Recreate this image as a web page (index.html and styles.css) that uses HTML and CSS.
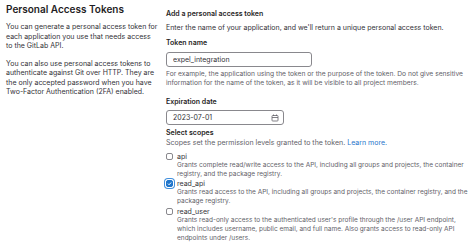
FILE: index.html
```html
<!DOCTYPE html>
<html lang="en">
<head>
    <meta charset="UTF-8">
    <meta name="viewport" content="width=device-width, initial-scale=1.0">
    <title>Personal Access Tokens</title>
    <link rel="stylesheet" href="styles.css">
</head>
<body>

    <div class="settings-row">
        <!-- Description -->
        <div class="settings-info">
            <h4>Personal Access Tokens</h4>
            <p>You can generate a personal access token for each application you use that needs access to the GitLab API.</p>
            <p>You can also use personal access tokens to authenticate against Git over HTTP. They are the only accepted password when you have Two-Factor Authentication (2FA) enabled.</p>
        </div>

        <!-- Formulaire -->
        <div class="settings-form">
            <h5>Add a personal access token</h5>
            <p class="intro">Enter the name of your application, and we'll return a unique personal access token.</p>

            <div class="form-group group-name">
                <label for="tokenName">Token name</label>
                <input type="text" id="tokenName" class="field field-wide" value="expel_integration">
                <p class="help">For example, the application using the token or the purpose of the token. Do not give sensitive information for the name of the token, as it will be visible to all project members.</p>
            </div>

            <div class="form-group group-date">
                <label for="expiresAt">Expiration date</label>
                <div class="field field-date">
                    <span>2023-07-01</span>
                    <svg width="8" height="8" viewBox="0 0 16 16" fill="none" stroke="#626168" stroke-width="1.6">
                        <rect x="2" y="3" width="12" height="11" rx="1.5"/>
                        <path d="M2 7h12M5 1v3M11 1v3"/>
                    </svg>
                </div>
            </div>

            <div class="form-group">
                <label class="label-tight">Select scopes</label>
                <p class="scopes-intro">Scopes set the permission levels granted to the token. <a href="#">Learn more.</a></p>

                <div class="scope">
                    <span class="check"></span>
                    <div>
                        <div class="scope-name">api</div>
                        <p class="help">Grants complete read/write access to the API, including all groups and projects, the container registry, and the package registry.</p>
                    </div>
                </div>

                <div class="scope">
                    <span class="check checked">
                        <svg width="5" height="5" viewBox="0 0 8 8" fill="none" stroke="#fff" stroke-width="1.6">
                            <path d="M1.5 4.2l1.8 1.8 3.3-3.6"/>
                        </svg>
                    </span>
                    <div>
                        <div class="scope-name">read_api</div>
                        <p class="help">Grants read access to the API, including all groups and projects, the container registry, and the package registry.</p>
                    </div>
                </div>

                <div class="scope">
                    <span class="check"></span>
                    <div>
                        <div class="scope-name">read_user</div>
                        <p class="help">Grants read-only access to the authenticated user's profile through the /user API endpoint, which includes username, public email, and full name. Also grants access to read-only API endpoints under /users.</p>
                    </div>
                </div>
            </div>
        </div>
    </div>

</body>
</html>
```

FILE: styles.css
```css
/* Styles généraux */
body {
    font-family: Inter, "Noto Sans", sans-serif;
    font-size: 7px;
    line-height: 9.5px;
    color: #333238;
    background: #ffffff;
    margin: 0;
    overflow: hidden;
}

p {
    margin: 0;
}

.settings-row {
    display: flex;
    gap: 8px;
    padding: 3px 0 0 6px;
}

.settings-info {
    flex: 0 0 152px;
}

h4 {
    font-size: 10px;
    line-height: 12px;
    font-weight: 600;
    color: #1f1e24;
    margin: 0 0 7px;
}

.settings-info p {
    margin-bottom: 8px;
    color: #333238;
}

.settings-form {
    flex: 1;
    min-width: 0;
    padding-top: 6px;
}

h5 {
    font-size: 7px;
    font-weight: 600;
    color: #1f1e24;
    margin: 0 0 4px;
}

.intro {
    margin-bottom: 6px;
    white-space: nowrap;
}

.group-name {
    margin-bottom: 8px;
}

.group-date {
    margin-bottom: 3px;
}

label {
    display: block;
    font-weight: 600;
    color: #1f1e24;
    margin-bottom: 4px;
}

label.label-tight {
    margin-bottom: 0;
}

.field {
    display: flex;
    align-items: center;
    box-sizing: border-box;
    height: 15px;
    padding: 0 6px;
    border: 1px solid #89888d;
    border-radius: 3px;
    font-family: inherit;
    font-size: 7px;
    color: #333238;
    background: #fff;
}

.field-wide {
    width: 146px;
}

.field-date {
    width: 118px;
    justify-content: space-between;
    padding-right: 4px;
}

.help {
    font-size: 6.7px;
    color: #626168;
    margin-top: 3px;
    width: 300px;
}

.scopes-intro {
    color: #626168;
    margin-bottom: 4.5px;
    white-space: nowrap;
}

a {
    color: #1f75cb;
    text-decoration: none;
}

.scope {
    display: flex;
    gap: 4px;
    margin-bottom: 0.5px;
    line-height: 9px;
}

.scope .help {
    font-size: 6.5px;
    margin-top: 0;
    line-height: 9px;
    width: 296px;
}

.check {
    flex: 0 0 auto;
    box-sizing: border-box;
    width: 7px;
    height: 7px;
    margin-top: 1px;
    border: 1px solid #89888d;
    border-radius: 2px;
    display: flex;
    align-items: center;
    justify-content: center;
}

.check.checked {
    background: #1f75cb;
    border-color: #1f75cb;
    box-shadow: 0 0 0 1px #fff, 0 0 0 2px #428fdc;
}

.scope-name {
    color: #333238;
}
```
